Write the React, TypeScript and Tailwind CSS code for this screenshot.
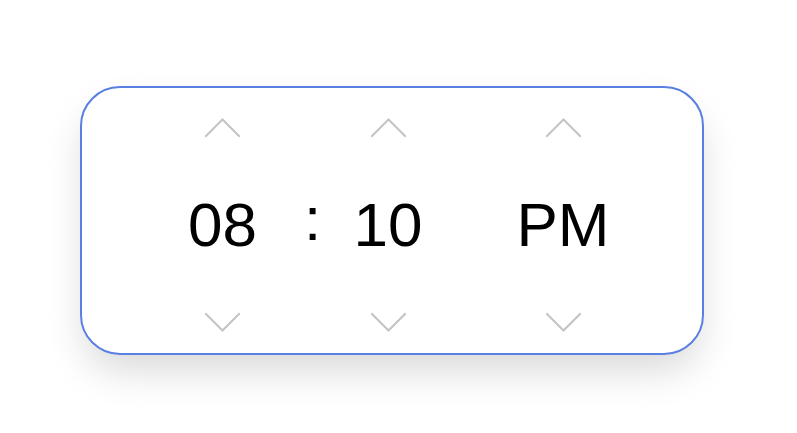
type Col = { value: string; width: string; extra?: string };

function Chevron({ dir }: { dir: "up" | "down" }) {
  const pts = dir === "up" ? "1,18 17.5,1.5 34,18" : "1,2 17.5,18.5 34,2";
  return (
    <svg width="35" height="20" viewBox="0 0 35 20" fill="none" className="block">
      <polyline points={pts} stroke="#c4c4c4" strokeWidth="2" strokeLinecap="square" />
    </svg>
  );
}

function Spinner({ value, width, extra = "" }: Col) {
  return (
    <div className={`flex flex-col items-center justify-between h-full ${width} ${extra}`}>
      <button className="cursor-pointer">
        <Chevron dir="up" />
      </button>
      <span className="text-[62px] leading-none text-black">{value}</span>
      <button className="cursor-pointer">
        <Chevron dir="down" />
      </button>
    </div>
  );
}

export default function App() {
  return (
    <div
      className="w-full h-[433px] bg-white pt-[86px] pl-[80px]"
      style={{ fontFamily: '"Liberation Sans", Arial, sans-serif' }}
    >
      {/* Time picker card */}
      <div className="w-[624px] h-[269px] border-2 border-[#5a7fe2] rounded-[40px] bg-white shadow-[0_20px_40px_-6px_rgba(0,0,0,0.16)]">
        <div className="flex h-full pt-[30px] pb-[21px] pl-[90px]">
          <Spinner value="08" width="w-[101px]" />
          <div className="flex flex-col items-center justify-between h-full w-[79px]">
            <div className="h-[20px]" />
            <span className="text-[62px] leading-none text-black mb-[12px]">:</span>
            <div className="h-[20px]" />
          </div>
          <Spinner value="10" width="w-[72px]" />
          <Spinner value="PM" width="w-[100px]" extra="ml-[89px]" />
        </div>
      </div>
    </div>
  );
}
